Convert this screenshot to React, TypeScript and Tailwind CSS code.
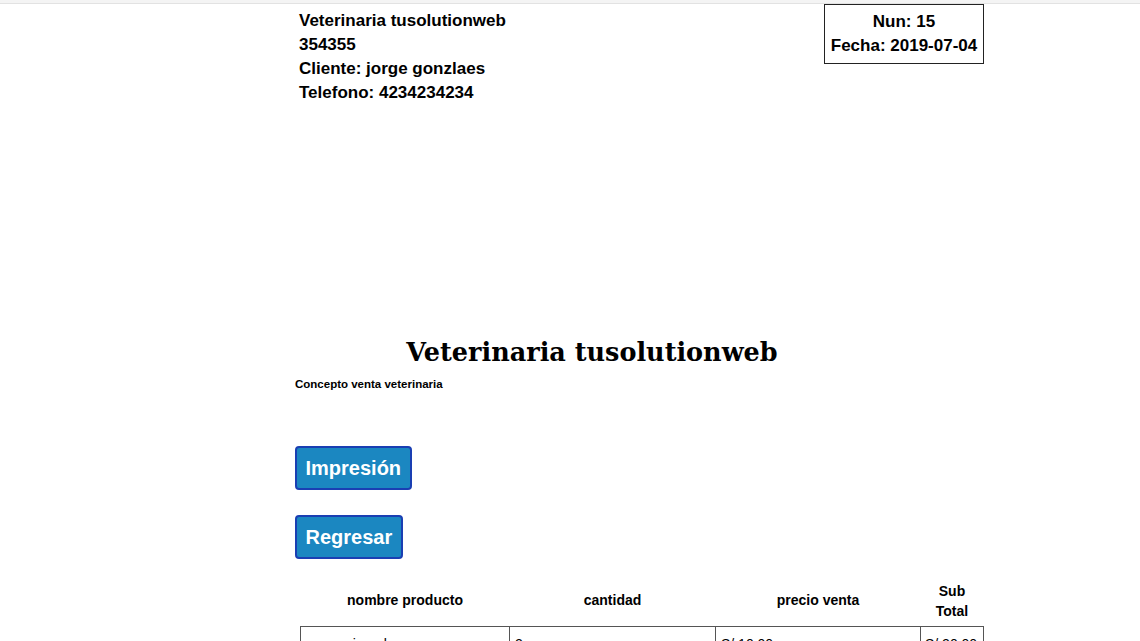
import React from "react";

const rows = [{ nombre: "agua mineral", cantidad: "2", precio: "S/ 10.00", sub: "S/ 20.00" }];

export default function App() {
  return (
    <div className="min-h-screen bg-white text-black font-['Liberation_Sans',Arial,sans-serif]">
      <div className="h-[4px] bg-[#f4f4f4] border-b border-[#e2e2e2]" />
      <div className="ml-[295px] w-[689px]">
        <div className="flex justify-between">
          <div className="pl-[4px] pt-[5px] text-[17px] font-bold leading-[24px]">
            <div>Veterinaria tusolutionweb</div>
            <div>354355</div>
            <div>Cliente: jorge gonzlaes</div>
            <div>Telefono: 4234234234</div>
          </div>
          <div className="w-[160px] h-[60px] border border-[#222] flex flex-col items-center justify-center text-[17px] font-bold leading-[24px]">
            <div>Nun: 15</div>
            <div>Fecha: 2019-07-04</div>
          </div>
        </div>

        <h1 className="mt-[230px] w-[594px] text-center font-['DejaVu_Serif',Georgia,serif] text-[25.5px] font-bold leading-[34px]">
          Veterinaria tusolutionweb
        </h1>
        <p className="mt-[7px] text-[11.5px] font-bold leading-[16px]">Concepto venta veterinaria</p>

        <div className="mt-[54px] flex flex-col items-start gap-[25px]">
          <button className="h-[44px] px-[8.5px] rounded-[4px] bg-[#1b87c1] border-2 border-[#1a3fb3] text-white text-[20px] font-bold">
            Impresión
          </button>
          <button className="h-[44px] px-[8.5px] rounded-[4px] bg-[#1b87c1] border-2 border-[#1a3fb3] text-white text-[20px] font-bold">
            Regresar
          </button>
        </div>

        <table className="mt-[17px] ml-[5px] w-[684px] border-collapse text-[14px]">
          <thead>
            <tr className="h-[50px]">
              <th className="w-[209px] font-bold">nombre producto</th>
              <th className="w-[206px] font-bold">cantidad</th>
              <th className="w-[205px] font-bold">precio venta</th>
              <th className="font-bold leading-[20px]">
                Sub
                <br />
                Total
              </th>
            </tr>
          </thead>
          <tbody>
            {rows.map((r) => (
              <tr key={r.nombre} className="h-[30px]">
                <td className="border border-[#555] px-[5px] pt-[7px] align-top">{r.nombre}</td>
                <td className="border border-[#555] px-[5px] pt-[7px] align-top">{r.cantidad}</td>
                <td className="border border-[#555] px-[5px] pt-[7px] align-top">{r.precio}</td>
                <td className="border border-[#555] px-[4px] pt-[7px] align-top whitespace-nowrap">{r.sub}</td>
              </tr>
            ))}
          </tbody>
        </table>
      </div>
    </div>
  );
}
